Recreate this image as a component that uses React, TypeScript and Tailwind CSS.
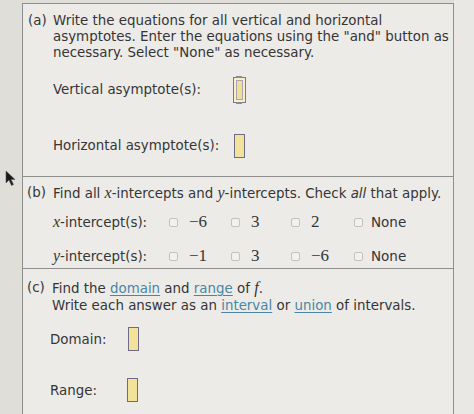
import React from 'react';

const sans = { fontFamily: '"DejaVu Sans", Verdana, sans-serif' };

const AnswerBox = ({ active = false }: { active?: boolean }) =>
  active ? (
    <div className="relative h-[26px] w-[13px] border-[1.5px] border-[#7a7594] bg-[#f6f0c8] p-[2px]">
      <div className="h-full w-full border border-[#a9a3c0] bg-[#f2e08e]" />
      <div className="absolute -top-[2px] left-[2px] h-[2px] w-[6px] bg-[#8c87a4]" />
      <div className="absolute -bottom-[2px] left-[2px] h-[2px] w-[6px] bg-[#8c87a4]" />
    </div>
  ) : (
    <div className="h-[24px] w-[11px] border-[1.5px] border-[#6f6a85] bg-[#f3e39a]" />
  );

const Check = ({ label, serif = true }: { label: string; serif?: boolean }) => (
  <div className="flex items-center">
    <span className="h-[9px] w-[9px] rounded-[2px] border border-[#c2c2c0] bg-[#f1f1ef]" />
    <span
      className={serif ? 'ml-[11px] text-[17px] font-["Liberation_Serif"]' : 'ml-[8px] text-[13.5px]'}
    >
      {label}
    </span>
  </div>
);

const Link = ({ children }: { children: React.ReactNode }) => (
  <span className="text-[#4a86a3] underline decoration-[#4a86a3] underline-offset-[2px]">{children}</span>
);

const MathVar = ({ v }: { v: string }) => (
  <span className="font-['Liberation_Serif'] text-[16px] italic">{v}</span>
);

const optCols = ['w-[62px]', 'w-[60px]', 'w-[63px]', 'w-[60px]'];

const InterceptRow = ({ v, opts }: { v: string; opts: string[] }) => (
  <div className="flex h-[18px] items-center">
    <div className="w-[116px]">
      <MathVar v={v} />
      -intercept(s):
    </div>
    {opts.map((o, i) => (
      <div key={i} className={optCols[i]}>
        <Check label={o} serif={o !== 'None'} />
      </div>
    ))}
  </div>
);

export default function App() {
  return (
    <div
      className="relative h-[414px] w-[474px] overflow-hidden whitespace-nowrap bg-[#e0ded9] pl-[22px] pt-[3px] text-[13.4px] leading-[16px] text-[#353535]"
      style={sans}
    >
      <div className="absolute right-0 top-0 h-full w-[20px] bg-[#e9e8e4]" />
      <div className="relative h-[420px] w-[432px] border border-[#8e8e8c] bg-[#ecebe8]">
        {/* (a) */}
        <section className="h-[173px] border-b border-[#8e8e8c] pl-[5px] pt-[9px]">
          <div className="flex">
            <span className="w-[25px]">(a)</span>
            <p>
              Write the equations for all vertical and horizontal
              <br />
              asymptotes. Enter the equations using the "and" button as
              <br />
              necessary. Select "None" as necessary.
            </p>
          </div>
          <div className="ml-[25px] mt-[16px] flex items-center">
            <span className="w-[180px]">Vertical asymptote(s):</span>
            <AnswerBox active />
          </div>
          <div className="ml-[25px] mt-[31px] flex items-center">
            <span className="w-[181px]">Horizontal asymptote(s):</span>
            <AnswerBox />
          </div>
        </section>

        {/* (b) */}
        <section className="h-[92px] border-b border-[#8e8e8c] pl-[4px] pt-[8px]">
          <div className="flex">
            <span className="w-[26px]">(b)</span>
            <p>
              Find all <MathVar v="x" />-intercepts and <MathVar v="y" />-intercepts. Check <i>all</i> that apply.
            </p>
          </div>
          <div className="ml-[26px] mt-[11px]">
            <InterceptRow v="x" opts={['−6', '3', '2', 'None']} />
            <div className="h-[16px]" />
            <InterceptRow v="y" opts={['−1', '3', '−6', 'None']} />
          </div>
        </section>

        {/* (c) */}
        <section className="pl-[4px] pt-[10px] leading-[17px]">
          <div className="flex">
            <span className="w-[25px]">(c)</span>
            <p>
              Find the <Link>domain</Link> and <Link>range</Link> of <MathVar v="f" />.
              <br />
              Write each answer as an <Link>interval</Link> or <Link>union</Link> of intervals.
            </p>
          </div>
          <div className="ml-[23px] mt-[13px] flex items-center">
            <span className="w-[78px]">Domain:</span>
            <AnswerBox />
          </div>
          <div className="ml-[23px] mt-[27px] flex items-center">
            <span className="w-[77px]">Range:</span>
            <AnswerBox />
          </div>
        </section>
      </div>

      {/* mouse cursor */}
      <svg className="absolute left-[5px] top-[170px]" width="12" height="17" viewBox="0 0 12 17">
        <path d="M1 1 L1 13 L4 10 L6.5 15.5 L8.5 14.5 L6 9.5 L10 9.5 Z" fill="#1a1a1a" stroke="#555" strokeWidth="0.6" />
      </svg>
    </div>
  );
}
